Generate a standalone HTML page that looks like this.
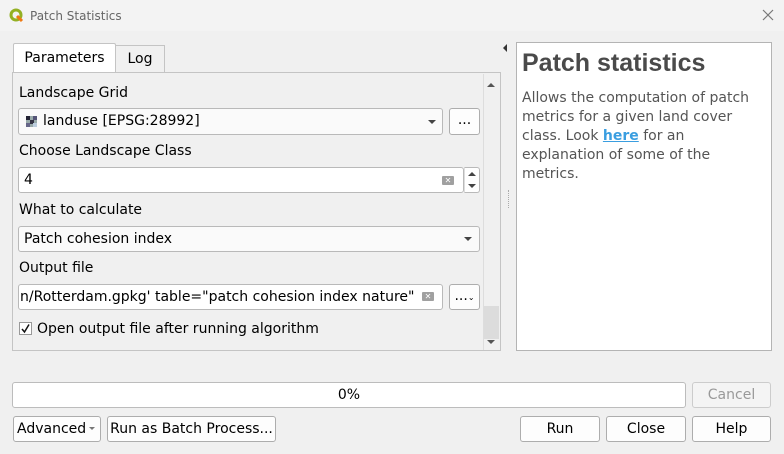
<!DOCTYPE html>
<html><head><style>
*{box-sizing:border-box;margin:0;padding:0}
body{width:784px;height:454px;background:#f0f0f0;font-family:"DejaVu Sans","Liberation Sans",sans-serif;font-size:14px;color:#000;position:relative;overflow:hidden}
.a{position:absolute}
.title{left:0;top:0;width:784px;height:31px;background:#f3f3f3;font-size:12px;color:#666}
.btn{position:absolute;background:#fdfdfd;border:1px solid #adadad;border-radius:3px;text-align:center;font-size:14px;line-height:24px}
.field{position:absolute;background:#fff;border:1px solid #b9b9b9;border-radius:3px;line-height:25px;padding-left:5px;font-size:14px;white-space:nowrap;overflow:hidden}
.lbl{position:absolute;left:19px;font-size:14px}
.arr{position:absolute;width:0;height:0;border-left:4px solid transparent;border-right:4px solid transparent;border-top:4px solid #444}
.clr{position:absolute;width:12px;height:9px;background:#a0a0a0;border-radius:1px;color:#fff;font-size:8px;line-height:9px;text-align:center}
</style></head><body>
<div class="a title">
 <svg class="a" style="left:9px;top:8px" width="15" height="15" viewBox="0 0 15 15"><circle cx="7" cy="7" r="5" fill="none" stroke="#93b023" stroke-width="3"/><path d="M8 8 L13 13" stroke="#ee7913" stroke-width="3"/></svg>
 <span class="a" style="left:30px;top:9px">Patch Statistics</span>
 <svg class="a" style="left:762px;top:9px" width="12" height="12"><path d="M1 1L11 11M11 1L1 11" stroke="#777" stroke-width="1.2"/></svg>
</div>
<div class="a" style="left:13px;top:43px;width:103px;height:30px;background:#fff;border:1px solid #c4c4c4;border-bottom:none;border-radius:2px 2px 0 0;text-align:center;line-height:29px">Parameters</div>
<div class="a" style="left:115px;top:45px;width:50px;height:27px;background:#f0f0f0;border:1px solid #c4c4c4;border-bottom:none;text-align:center;line-height:27px">Log</div>
<div class="a" style="left:12px;top:72px;width:489px;height:279px;border:1px solid #c4c4c4;background:#f0f0f0"></div>
<div class="a" style="left:483px;top:74px;width:17px;height:276px;background:#f0f0f0;border-left:1px solid #ddd"></div>
<div class="a" style="left:484px;top:306px;width:15px;height:33px;background:#dcdcdc"></div>
<div class="arr" style="left:487px;top:83px;border-top:none;border-bottom:4px solid #555"></div>
<div class="arr" style="left:487px;top:340px;border-top-color:#555"></div>
<div class="arr" style="left:503px;top:44px;border:none;border-top:4px solid transparent;border-bottom:4px solid transparent;border-right:4px solid #333"></div>

<div class="lbl" style="top:85px">Landscape Grid</div>
<div class="field" style="left:18px;top:108px;width:425px;height:27px;background:#fafafa;padding-left:24px">landuse [EPSG:28992]</div>
<svg class="a" style="left:26px;top:116px" width="11" height="11"><rect width="11" height="11" fill="#9aa"/><rect x="0" y="0" width="4" height="4" fill="#223"/><rect x="4" y="4" width="4" height="4" fill="#334"/><rect x="7" y="0" width="4" height="4" fill="#557"/><rect x="0" y="7" width="4" height="4" fill="#668"/><rect x="7" y="7" width="4" height="4" fill="#bcd"/></svg>
<div class="arr" style="left:428px;top:120px"></div>
<div class="btn" style="left:449px;top:108px;width:31px;height:27px;line-height:22px">...</div>

<div class="lbl" style="top:143px">Choose Landscape Class</div>
<div class="field" style="left:18px;top:167px;width:446px;height:26px">4</div>
<div class="clr" style="left:442px;top:176px">✕</div>
<div class="a" style="left:464px;top:167px;width:16px;height:26px;background:#fff;border:1px solid #b9b9b9;border-left:1px solid #ddd;border-radius:0 3px 3px 0"></div>
<div class="arr" style="left:468px;top:172px;border-top:none;border-bottom:4px solid #444"></div>
<div class="arr" style="left:468px;top:184px"></div>

<div class="lbl" style="top:202px">What to calculate</div>
<div class="field" style="left:18px;top:226px;width:462px;height:26px;background:#fafafa">Patch cohesion index</div>
<div class="arr" style="left:464px;top:237px"></div>

<div class="lbl" style="top:260px">Output file</div>
<div class="field" style="left:18px;top:284px;width:425px;height:26px;padding-left:1px">n/Rotterdam.gpkg' table="patch cohesion index nature"</div>
<div class="clr" style="left:422px;top:292px">✕</div>
<div class="btn" style="left:449px;top:284px;width:31px;height:26px;line-height:22px">...<span style="font-size:8px">⌄</span></div>

<div class="a" style="left:19px;top:322px;width:13px;height:13px;background:#fff;border:1px solid #999"></div>
<svg class="a" style="left:20px;top:323px" width="11" height="11"><path d="M2 6L4.5 9L9 1.5" stroke="#111" stroke-width="1.5" fill="none"/></svg>
<div class="lbl" style="left:37px;top:321px">Open output file after running algorithm</div>

<div class="a" style="left:508px;top:190px;width:1px;height:18px;border-left:1px dotted #aaa"></div>
<div class="a" style="left:516px;top:42px;width:256px;height:309px;background:#fff;border:1px solid #b4b4b4;padding:5px 5px;color:#555;white-space:nowrap">
 <div style="font-family:'Liberation Sans',sans-serif;font-size:25px;font-weight:bold;color:#4a4a4a;line-height:30px">Patch statistics</div>
 <div style="font-size:14px;line-height:19px;margin-top:11px">Allows the computation of patch<br>metrics for a given land cover<br>class. Look <b style="color:#3a9ee0;text-decoration:underline">here</b> for an<br>explanation of some of the<br>metrics.</div>
</div>
<div class="a" style="left:12px;top:382px;width:674px;height:26px;background:#fff;border:1px solid #bcbcbc;border-radius:3px;text-align:center;line-height:25px">0%</div>
<div class="btn" style="left:692px;top:382px;width:79px;height:26px;color:#999;background:#f4f4f4;border-color:#ccc">Cancel</div>
<div class="btn" style="left:13px;top:416px;width:88px;height:26px;text-align:left;padding-left:3px">Advanced</div>
<div class="arr" style="left:89px;top:427px;border-left-width:3px;border-right-width:3px;border-top:3px solid #777"></div>
<div class="btn" style="left:107px;top:416px;width:169px;height:26px">Run as Batch Process...</div>
<div class="btn" style="left:520px;top:416px;width:80px;height:26px">Run</div>
<div class="btn" style="left:606px;top:416px;width:80px;height:26px">Close</div>
<div class="btn" style="left:692px;top:416px;width:79px;height:26px">Help</div>
</body></html>
